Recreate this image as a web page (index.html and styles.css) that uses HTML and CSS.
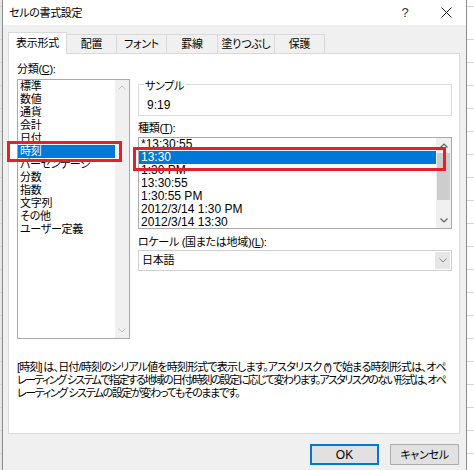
FILE: index.html
```html
<!DOCTYPE html>
<html lang="ja">
<head>
<meta charset="utf-8">
<title>セルの書式設定</title>
<link rel="stylesheet" href="styles.css">
</head>
<body>
<div class="screen">
  <div class="xl xl-left"></div>
  <div class="dialog">
    <div class="titlebar">
      <span class="title jp">セルの書式設定</span>
      <span class="tb-help">?</span>
      <span class="tb-close"><svg width="11" height="11" viewBox="0 0 11 11"><path d="M0.5 0.5L10.5 10.5M10.5 0.5L0.5 10.5" stroke="#1a1a1a" stroke-width="1" fill="none"/></svg></span>
    </div>
    <div class="body">
      <div class="tabs jp">
        <div class="tab active t1">表示形式</div>
        <div class="tab t2">配置</div>
        <div class="tab t3">フォント</div>
        <div class="tab t4">罫線</div>
        <div class="tab t5">塗りつぶし</div>
        <div class="tab t6">保護</div>
      </div>
      <div class="panel">
        <div class="cols">
          <div class="col-left">
            <div class="label jp">分類(<u>C</u>):</div>
            <div class="listbox cat">
              <ul class="items jp">
                <li>標準</li>
                <li>数値</li>
                <li>通貨</li>
                <li>会計</li>
                <li>日付</li>
                <li class="sel">時刻</li>
                <li>パーセンテージ</li>
                <li>分数</li>
                <li>指数</li>
                <li>文字列</li>
                <li>その他</li>
                <li>ユーザー定義</li>
              </ul>
              <div class="vscroll off">
                <div class="arrow"><svg width="8" height="5" viewBox="0 0 8 5"><polyline points="0.5,4.5 4,1 7.5,4.5" fill="none" stroke="#c2c2c2" stroke-width="1"/></svg></div>
                <div class="arrow"><svg width="8" height="5" viewBox="0 0 8 5"><polyline points="0.5,0.5 4,4 7.5,0.5" fill="none" stroke="#c2c2c2" stroke-width="1"/></svg></div>
              </div>
            </div>
          </div>
          <div class="col-right">
            <fieldset class="sample">
              <legend class="jp">サンプル</legend>
              <div class="sample-val">9:19</div>
            </fieldset>
            <div class="label jp lbl-type">種類(<u>T</u>):</div>
            <div class="listbox types">
              <ul class="items">
                <li>*13:30:55</li>
                <li class="sel">13:30</li>
                <li>1:30 PM</li>
                <li>13:30:55</li>
                <li>1:30:55 PM</li>
                <li>2012/3/14 1:30 PM</li>
                <li>2012/3/14 13:30</li>
              </ul>
              <div class="vscroll">
                <div class="arrow"><svg width="8" height="5" viewBox="0 0 8 5"><polyline points="0.5,4.5 4,1 7.5,4.5" fill="none" stroke="#606060" stroke-width="1.2"/></svg></div>
                <div class="thumb"></div>
                <div class="track"></div>
                <div class="arrow"><svg width="8" height="5" viewBox="0 0 8 5"><polyline points="0.5,0.5 4,4 7.5,0.5" fill="none" stroke="#606060" stroke-width="1.2"/></svg></div>
              </div>
            </div>
            <div class="label jp lbl-locale">ロケール (国または地域)(<u>L</u>):</div>
            <div class="combo">
              <span class="combo-text jp">日本語</span>
              <span class="combo-btn"><svg width="8" height="5" viewBox="0 0 8 5"><polyline points="0.5,0.5 4,4 7.5,0.5" fill="none" stroke="#8a8a8a" stroke-width="1"/></svg></span>
            </div>
          </div>
        </div>
        <div class="desc jp">
          <span class="dline full">[時刻] は、日付/時刻のシリアル値を時刻形式で表示します。アスタリスク (*) で始まる時刻形式は、オペ</span>
          <span class="dline full l2">レーティング システムで指定する地域の日付/時刻の設定に応じて変わります。アスタリスクのない形式は、オペ</span>
          <span class="dline last">レーティング システムの設定が変わってもそのままです。</span>
        </div>
      </div>
      <div class="buttons">
        <button class="btn default">OK</button>
        <button class="btn jp">キャンセル</button>
      </div>
      <div class="mark mark-cat"></div>
      <div class="mark mark-type"></div>
    </div>
  </div>
  <div class="xl xl-right"></div>
</div>
</body>
</html>
```

FILE: styles.css
```css
html, body {
  margin: 0;
  padding: 0;
}
body {
  font-family: "Liberation Sans", "Noto Sans CJK JP", sans-serif;
  font-size: 12px;
  color: #000;
  font-feature-settings: "palt";
}
.jp {
  font-size: 11px;
  letter-spacing: -0.3px;
}
.screen {
  display: flex;
  width: 474px;
  height: 470px;
  overflow: hidden;
}
.xl {
  background-color: #ffffff;
  background-image: repeating-linear-gradient(to bottom, transparent 0 22px, #d6d6d6 22px 23px);
  background-position: 0 17px;
}
.xl-left {
  width: 2px;
  background-color: #e6e6e6;
}
.xl-right {
  flex: 1;
}
.dialog {
  width: 465px;
  box-sizing: border-box;
  border-left: 1px solid #8c8c8c;
  border-right: 1px solid #8c8c8c;
  display: flex;
  flex-direction: column;
}
.titlebar {
  height: 25px;
  flex: none;
  background: #fff;
  display: flex;
  align-items: center;
  padding: 0 14px 0 6px;
}
.title {
  flex: 1;
  line-height: 14px;
}
.tb-help {
  width: 10px;
  text-align: center;
  margin-right: 31px;
  font-size: 13px;
  color: #333;
  line-height: 14px;
}
.tb-close {
  width: 11px;
  height: 11px;
  display: flex;
}
.body {
  flex: 1;
  background: #f0f0f0;
  padding: 7px 6px 0 5px;
  position: relative;
}
.tabs {
  display: flex;
  align-items: flex-end;
  height: 21px;
}
.tab {
  height: 19px;
  box-sizing: border-box;
  border: 1px solid #d9d9d9;
  border-bottom: none;
  margin-left: -1px;
  text-align: center;
  line-height: 18px;
  background: #f0f0f0;
  white-space: nowrap;
}
.tab.active {
  height: 22px;
  margin-left: 0;
  margin-bottom: -1px;
  background: #fff;
  line-height: 20px;
  position: relative;
  z-index: 1;
}
.t1 { width: 59px; }
.t2 { width: 51px; }
.t3 { width: 51px; }
.t4 { width: 52px; }
.t5 { width: 58px; }
.t6 { width: 51px; }
.panel {
  background: #fff;
  border: 1px solid #d9d9d9;
  height: 381px;
  box-sizing: border-box;
  padding: 8px 7px 0 8px;
}
.cols {
  display: grid;
  grid-template-columns: 113px 314px;
  column-gap: 8px;
  align-items: start;
}
.label {
  line-height: 14px;
  height: 14px;
  white-space: nowrap;
}
.col-left .label {
  margin-bottom: 3px;
}
.listbox {
  border: 1px solid #a9a9a9;
  background: #fff;
  display: flex;
  box-sizing: border-box;
  overflow: hidden;
}
.listbox.cat {
  height: 260px;
}
.items {
  flex: 1;
  list-style: none;
  margin: 0;
  padding: 0;
  overflow: hidden;
  min-width: 0;
}
.items li {
  height: 13px;
  line-height: 13px;
  padding-left: 2px;
  white-space: nowrap;
}
.items li.sel {
  background: #0078d7;
  color: #fff;
}
.vscroll {
  width: 15px;
  flex: none;
  background: #f0f0f0;
  display: flex;
  flex-direction: column;
}
.cat .vscroll {
  width: 14px;
  justify-content: space-between;
}
.arrow {
  height: 15px;
  flex: none;
  display: flex;
  align-items: center;
  justify-content: center;
}
.thumb {
  height: 47px;
  margin: 0 1px;
  background: #cdcdcd;
  flex: none;
}
.track {
  flex: 1;
}
.sample {
  margin: 14px 0 0 0;
  padding: 0 0 3px 5px;
  border: 1px solid #dcdcdc;
  min-width: 0;
}
.sample legend {
  padding: 4px 1px 0 1px;
  line-height: 12px;
}
.sample-val {
  margin: 6px 0 0 3px;
  line-height: 14px;
}
.lbl-type {
  margin-top: 5px;
  margin-bottom: 2px;
}
.listbox.types {
  height: 92px;
}
.lbl-locale {
  margin-top: 6px;
  margin-bottom: 1px;
}
.combo {
  height: 21px;
  box-sizing: border-box;
  border: 1px solid #cfcfcf;
  background: #fff;
  display: flex;
  align-items: stretch;
}
.combo-text {
  flex: 1;
  padding-left: 3px;
  line-height: 19px;
}
.combo-btn {
  width: 15px;
  margin: 1px;
  background: #e6e6e6;
  display: flex;
  align-items: center;
  justify-content: center;
}
.desc {
  margin: 22px 0 0 0;
  width: 428px;
  line-height: 13px;
  letter-spacing: -1.6px;
}
.dline {
  display: block;
  white-space: nowrap;
}
.dline.full {
  white-space: normal;
  text-align: justify;
  text-align-last: justify;
}
.dline.l2 {
  letter-spacing: -1.9px;
}
.dline.last {
  letter-spacing: -1.4px;
}
.buttons {
  display: flex;
  justify-content: flex-end;
  gap: 11px;
  margin: 10px 1px 0 0;
}
.btn {
  width: 69px;
  height: 21px;
  box-sizing: border-box;
  border: 1px solid #adadad;
  background: #e1e1e1;
  font-family: "Liberation Sans", "Noto Sans CJK JP", sans-serif;
  font-size: 12px;
  font-feature-settings: "palt";
  color: #000;
  padding: 0;
  line-height: 18px;
}
.btn.jp {
  font-size: 11px;
}
.btn.default {
  border: 1px solid #0078d7;
  box-shadow: inset 0 0 0 1px #0078d7;
}
.mark {
  position: absolute;
  border: 3px solid #e5202a;
  box-sizing: border-box;
  pointer-events: none;
}
.mark-cat {
  left: 4px;
  top: 116px;
  width: 115px;
  height: 21px;
}
.mark-type {
  left: 130px;
  top: 122px;
  width: 313px;
  height: 24px;
}
```
